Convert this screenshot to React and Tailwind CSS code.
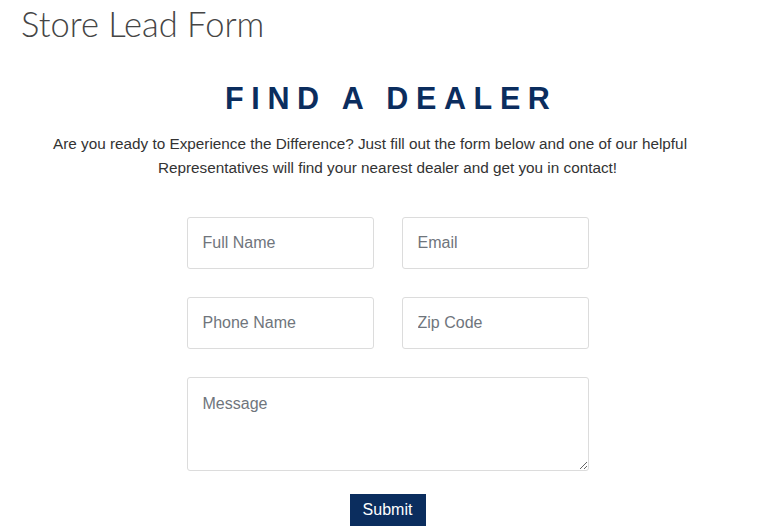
export default function App() {
  return (
    <div className="min-h-[532px] bg-white font-['Liberation_Sans',Arial,sans-serif]">
      <h1 className="pl-[21px] pt-[2px] text-[34.5px] leading-[44px] font-light text-[#454545] font-['Lato',sans-serif]">
        Store Lead Form
      </h1>

      <div className="pl-[7px]">
        <h2 className="mt-[34px] text-center text-[30.5px] leading-[36px] font-black tracking-[0.25em] pl-[0.25em] text-[#0b2d5e]">
          FIND A DEALER
        </h2>

        <p className="mt-[16px] text-center text-[15.3px] leading-[23.5px] text-[#333]">
          <span className="block pr-[35px]">
            Are you ready to Experience the Difference? Just fill out the form below and one of our helpful
          </span>
          <span className="block">Representatives will find your nearest dealer and get you in contact!</span>
        </p>

        <form className="mx-auto mt-[38px] flex w-[402px] flex-col gap-[28px]">
          <div className="grid grid-cols-2 gap-[28px]">
            <input
              placeholder="Full Name"
              className="h-[52px] rounded-[3px] border border-[#dcdcdc] px-[15px] text-[16px] text-[#555] placeholder:text-[#6f757c] outline-none"
            />
            <input
              placeholder="Email"
              className="h-[52px] rounded-[3px] border border-[#dcdcdc] px-[15px] text-[16px] text-[#555] placeholder:text-[#6f757c] outline-none"
            />
          </div>
          <div className="grid grid-cols-2 gap-[28px]">
            <input
              placeholder="Phone Name"
              className="h-[52px] rounded-[3px] border border-[#dcdcdc] px-[15px] text-[16px] text-[#555] placeholder:text-[#6f757c] outline-none"
            />
            <input
              placeholder="Zip Code"
              className="h-[52px] rounded-[3px] border border-[#dcdcdc] px-[15px] text-[16px] text-[#555] placeholder:text-[#6f757c] outline-none"
            />
          </div>
          <textarea
            placeholder="Message"
            className="h-[94px] rounded-[3px] border border-[#dcdcdc] px-[15px] pt-[16px] text-[16px] leading-[20px] text-[#555] placeholder:text-[#6f757c] outline-none"
          />
          <div className="-mt-[5px] flex justify-center">
            <button
              type="button"
              className="h-[32px] w-[76px] bg-[#0b2d5e] text-[16px] text-white"
            >
              Submit
            </button>
          </div>
        </form>
      </div>
    </div>
  )
}
